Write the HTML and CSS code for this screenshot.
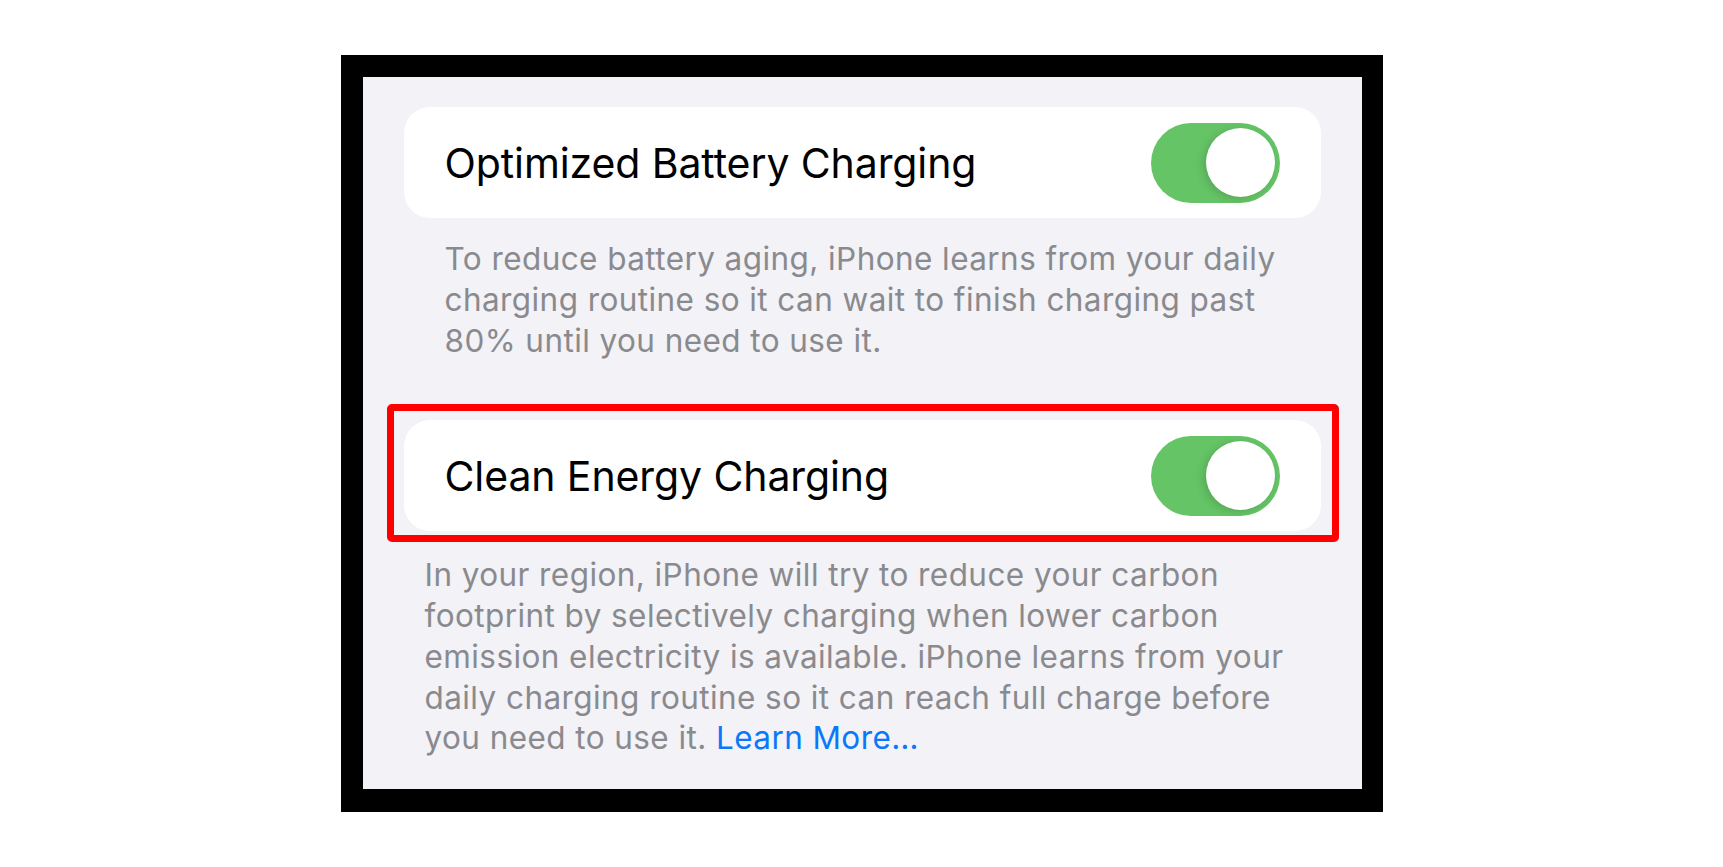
FILE: index.html
```html
<!DOCTYPE html>
<html lang="en">
<head>
<meta charset="utf-8">
<title>Battery Charging</title>
<link rel="stylesheet" href="styles.css">
</head>
<body>
<div class="frame">
  <div class="screen">
    <div class="card">
      <span class="card-title">Optimized Battery Charging</span>
      <span class="toggle"><span class="knob"></span></span>
    </div>
    <p class="note note-first">To reduce battery aging, iPhone learns from your daily<br>charging routine so it can wait to finish charging past<br>80% until you need to use it.</p>
    <div class="card card-highlight">
      <span class="card-title">Clean Energy Charging</span>
      <span class="toggle"><span class="knob"></span></span>
    </div>
    <p class="note note-second">In your region, iPhone will try to reduce your carbon<br>footprint by selectively charging when lower carbon<br>emission electricity is available. iPhone learns from your<br>daily charging routine so it can reach full charge before<br>you need to use it. <a class="link" href="#">Learn More…</a></p>
  </div>
</div>
</body>
</html>
```
FILE: styles.css
```css
html, body {
  margin: 0;
  padding: 0;
  background: #ffffff;
}

body {
  min-height: 100vh;
  display: flex;
  align-items: center;
  justify-content: center;
  font-family: Inter, "Noto Sans", "Liberation Sans", sans-serif;
}

.frame {
  background: #000000;
  padding: 22px 21px 23px 22px;
}

.screen {
  width: 999px;
  height: 712px;
  box-sizing: border-box;
  background: #f2f2f7;
  padding: 30px 41px 0 41px;
  display: flex;
  flex-direction: column;
}

.card {
  height: 111px;
  box-sizing: border-box;
  background: #ffffff;
  border-radius: 26px;
  display: flex;
  align-items: center;
  justify-content: space-between;
  padding: 0 41px 0 41px;
  flex-shrink: 0;
}

.card-title {
  font-size: 41px;
  line-height: 50px;
  letter-spacing: -0.1px;
  color: #000000;
}

.toggle {
  width: 129px;
  height: 80px;
  border-radius: 40px;
  background: #65c466;
  display: flex;
  align-items: center;
  justify-content: flex-end;
  padding: 0 5px;
  box-sizing: border-box;
}

.knob {
  width: 69px;
  height: 69px;
  border-radius: 50%;
  background: #ffffff;
  box-shadow: -3px 2px 8px rgba(0, 0, 0, 0.14), 0 0 1px rgba(0, 0, 0, 0.08);
}

.note {
  margin: 0;
  font-size: 31.5px;
  line-height: 40.75px;
  letter-spacing: 0.42px;
  color: #8a8a8e;
  white-space: nowrap;
}

.note-first {
  margin-top: 21px;
  margin-bottom: 59px;
  padding-left: 41px;
}

.note-second {
  margin-top: 24px;
  padding-left: 21px;
}

.link {
  color: #0b79f7;
  text-decoration: none;
}

.card-highlight {
  position: relative;
}

.card-highlight::after {
  content: "";
  position: absolute;
  top: -16px;
  left: -17px;
  right: -18px;
  bottom: -11px;
  border: 7px solid #ff0000;
  border-radius: 5px;
  pointer-events: none;
}
```
